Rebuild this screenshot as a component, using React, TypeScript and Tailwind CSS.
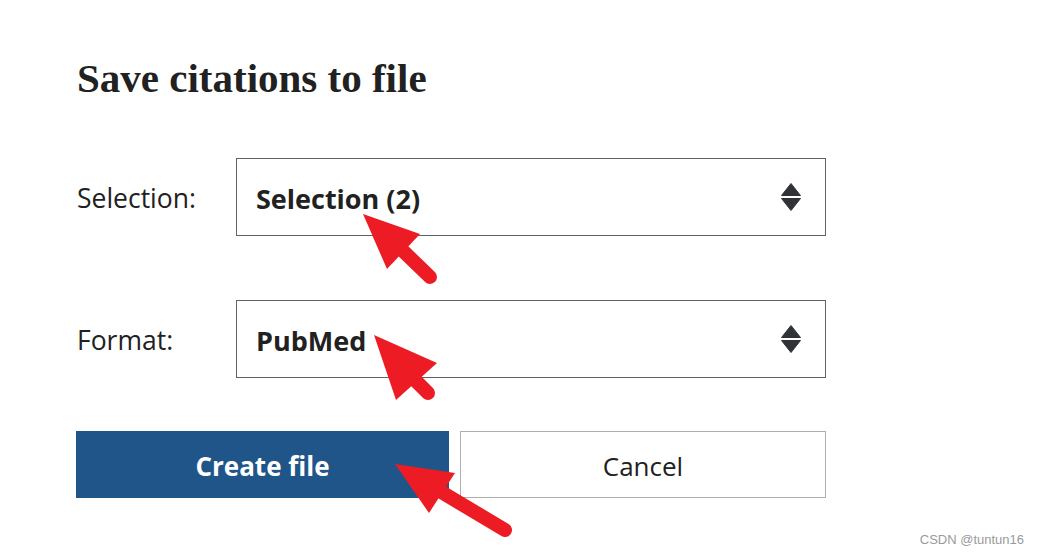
import React from 'react'

function UpDown() {
  return (
    <svg width="20" height="28" viewBox="0 0 20 28" className="shrink-0">
      <path d="M10 0.5 L19.5 12.5 L0.5 12.5 Z" fill="#2f3237" strokeLinejoin="round" stroke="#2f3237" strokeWidth="1" />
      <path d="M0.5 15.5 L19.5 15.5 L10 27.5 Z" fill="#2f3237" strokeLinejoin="round" stroke="#2f3237" strokeWidth="1" />
    </svg>
  )
}

function SelectBox({ value }: { value: string }) {
  return (
    <div className="w-[590px] h-[78px] border border-[#5f636b] flex items-center justify-between pl-[19px] pr-[24px]">
      <span className="text-[27px] font-bold text-[#212121] pt-[4px]">{value}</span>
      <UpDown />
    </div>
  )
}

function Arrows() {
  const red = '#ed1c24'
  return (
    <svg className="absolute left-0 top-0 pointer-events-none" width="1039" height="556" viewBox="0 0 1039 556">
      <polygon points="363,214 420,234 387,269" fill={red} />
      <line x1="400" y1="248" x2="430" y2="277" stroke={red} strokeWidth="14" strokeLinecap="round" />
      <polygon points="374,335 437,363 396,400" fill={red} />
      <line x1="412" y1="377" x2="428" y2="393" stroke={red} strokeWidth="14" strokeLinecap="round" />
      <polygon points="395,464 455,473 429,513" fill={red} />
      <line x1="438" y1="490" x2="505" y2="530" stroke={red} strokeWidth="14" strokeLinecap="round" />
    </svg>
  )
}

export default function App() {
  return (
    <div className="relative w-[1039px] h-[556px] overflow-hidden bg-white text-[#212121] font-['Open_Sans',sans-serif]">
      <div className="pl-[77px] pt-[58px]">
        <h2 className="font-['Liberation_Serif',serif] font-bold text-[41px] leading-none">
          Save citations to file
        </h2>

        <div className="mt-[59px] flex flex-col gap-[64px]">
          <div className="flex items-center">
            <label className="w-[159px] text-[26.5px] pt-[4px]">Selection:</label>
            <SelectBox value="Selection (2)" />
          </div>
          <div className="flex items-center">
            <label className="w-[159px] text-[26.5px] pt-[4px]">Format:</label>
            <SelectBox value="PubMed" />
          </div>
        </div>

        <div className="mt-[53px] flex gap-[11px] -ml-px">
          <button className="w-[373px] h-[67px] bg-[#20558a] text-white text-[26px] font-bold pt-[4px]">
            Create file
          </button>
          <button className="w-[366px] h-[67px] bg-white border border-[#aeaeae] text-[26px] text-[#212121] pt-[4px]">
            Cancel
          </button>
        </div>
      </div>

      <Arrows />

      <div className="absolute right-[15px] bottom-[7px] text-[13px] text-[#9a9a9a] font-['Liberation_Sans',sans-serif]">
        CSDN @tuntun16
      </div>
    </div>
  )
}
